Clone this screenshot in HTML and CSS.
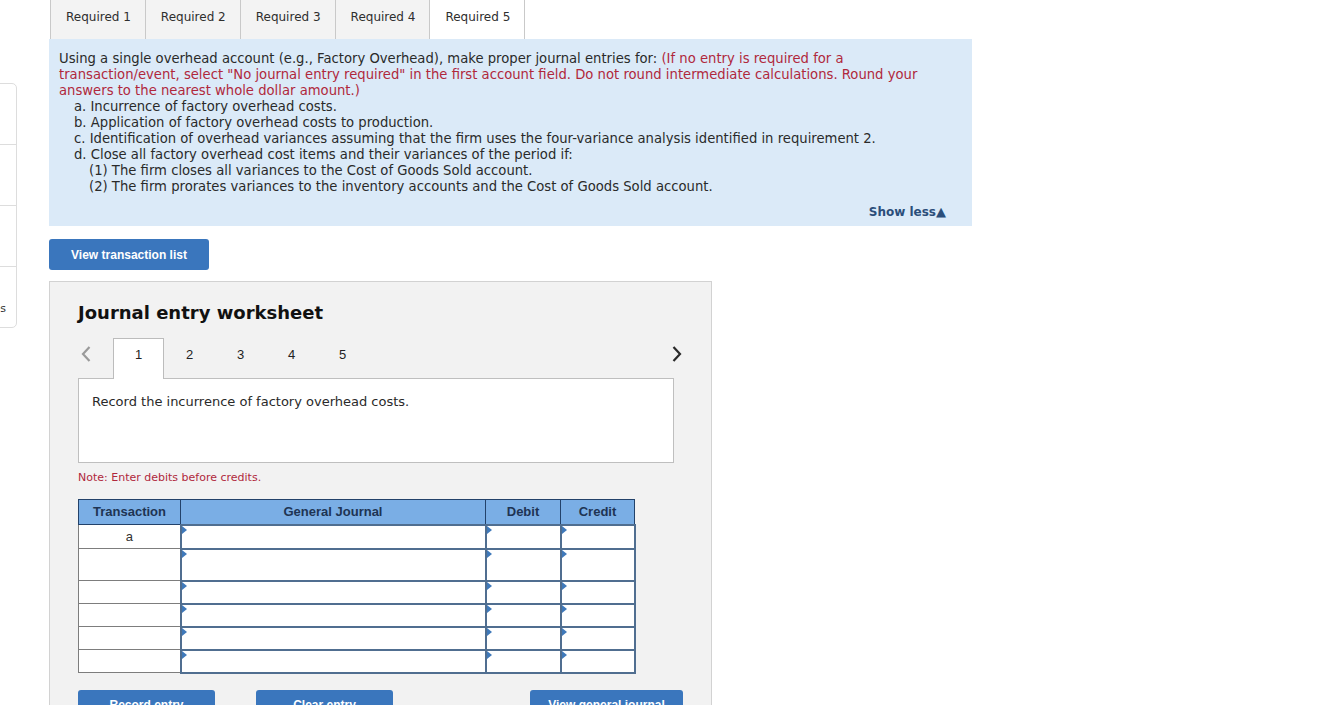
FILE: index.html
```html
<!DOCTYPE html>
<html lang="en">
<head>
<meta charset="utf-8">
<title>Journal entry worksheet</title>
<link rel="stylesheet" href="styles.css">
</head>
<body>
<div class="page">
  <aside class="sidebar">
    <div class="side-item"></div>
    <div class="side-item"></div>
    <div class="side-item"></div>
    <div class="side-item side-label"><span>Resources</span></div>
  </aside>
  <main class="main">
    <nav class="req-tabs">
      <a class="req-tab">Required 1</a>
      <a class="req-tab">Required 2</a>
      <a class="req-tab">Required 3</a>
      <a class="req-tab">Required 4</a>
      <a class="req-tab active">Required 5</a>
    </nav>
    <section class="prompt">
      <p class="prompt-text">Using a single overhead account (e.g., Factory Overhead), make proper journal entries for: <span class="hint">(If no entry is required for a transaction/event, select "No journal entry required" in the first account field. Do not round intermediate calculations. Round your answers to the nearest whole dollar amount.)</span></p>
      <ul class="parts">
        <li>a. Incurrence of factory overhead costs.</li>
        <li>b. Application of factory overhead costs to production.</li>
        <li>c. Identification of overhead variances assuming that the firm uses the four-variance analysis identified in requirement 2.</li>
        <li>d. Close all factory overhead cost items and their variances of the period if:
          <ul class="subparts">
            <li>(1) The firm closes all variances to the Cost of Goods Sold account.</li>
            <li>(2) The firm prorates variances to the inventory accounts and the Cost of Goods Sold account.</li>
          </ul>
        </li>
      </ul>
      <div class="show-less">Show less<span class="tri">▲</span></div>
    </section>
    <div class="list-bar"><button class="btn btn-list">View transaction list</button></div>
    <section class="worksheet">
      <h2 class="ws-title">Journal entry worksheet</h2>
      <div class="entry-nav">
        <span class="chev chev-left"><svg width="12" height="18" viewBox="0 0 12 18"><path d="M9.5 2 L3 9 L9.5 16" fill="none" stroke="#9a9a9a" stroke-width="2.2"/></svg></span>
        <div class="entry-tabs">
          <span class="entry-tab active">1</span>
          <span class="entry-tab">2</span>
          <span class="entry-tab">3</span>
          <span class="entry-tab">4</span>
          <span class="entry-tab">5</span>
        </div>
        <span class="chev chev-right"><svg width="12" height="18" viewBox="0 0 12 18"><path d="M2.5 2 L9 9 L2.5 16" fill="none" stroke="#2a2a2a" stroke-width="2.2"/></svg></span>
      </div>
      <div class="entry-desc">Record the incurrence of factory overhead costs.</div>
      <p class="note">Note: Enter debits before credits.</p>
      <table class="journal">
        <colgroup><col class="c-tx"><col class="c-gj"><col class="c-dr"><col class="c-cr"></colgroup>
        <thead>
          <tr><th>Transaction</th><th>General Journal</th><th>Debit</th><th>Credit</th></tr>
        </thead>
        <tbody>
          <tr class="r-first"><td class="tx">a</td><td class="in"></td><td class="in"></td><td class="in"></td></tr>
          <tr class="r-tall"><td class="tx"></td><td class="in"></td><td class="in"></td><td class="in"></td></tr>
          <tr class="r"><td class="tx"></td><td class="in"></td><td class="in"></td><td class="in"></td></tr>
          <tr class="r"><td class="tx"></td><td class="in"></td><td class="in"></td><td class="in"></td></tr>
          <tr class="r"><td class="tx"></td><td class="in"></td><td class="in"></td><td class="in"></td></tr>
          <tr class="r"><td class="tx"></td><td class="in"></td><td class="in"></td><td class="in"></td></tr>
        </tbody>
      </table>
      <div class="actions">
        <button class="btn btn-act">Record entry</button>
        <button class="btn btn-act">Clear entry</button>
        <button class="btn btn-act btn-view">View general journal</button>
      </div>
    </section>
  </main>
</div>
</body>
</html>
```
FILE: styles.css
```css
* { box-sizing: border-box; }
html, body { margin: 0; padding: 0; background: #fff; }
body {
  font-family: "DejaVu Sans", Verdana, sans-serif;
  font-size: 13px;
  color: #2a2a2a;
  overflow: hidden;
}
.page {
  display: flex;
  align-items: flex-start;
  width: 1342px;
  height: 705px;
  overflow: hidden;
}

/* left rail */
.sidebar {
  flex: none;
  margin-left: -6px;
  margin-top: 83px;
  width: 23px;
  border: 1px solid #dddddd;
  border-radius: 5px;
  background: #fff;
}
.side-item { height: 61px; border-top: 1px solid #dddddd; }
.side-item:first-child { border-top: 0; height: 60px; }
.side-label {
  display: flex;
  justify-content: flex-end;
  white-space: nowrap;
  padding: 35px 10px 0 0;
  font-size: 11px;
  line-height: 14px;
  color: #333;
}

/* main column */
.main {
  flex: none;
  margin-left: 32px;
  width: 923px;
}

.req-tabs { display: flex; padding-left: 1px; }
.req-tab {
  padding: 9px 14px 14px 15px;
  line-height: 16px;
  font-size: 12px;
  color: #2e2e2e;
  background: #f3f3f3;
  border-right: 1px solid #c9c9c9;
  cursor: pointer;
}
.req-tab:first-child { border-left: 1px solid #c9c9c9; }
.req-tab.active { background: #fff; }

.prompt {
  background: #dbeaf8;
  padding: 12px 12px 6px 10px;
  line-height: 16px;
  font-size: 13.2px;
}
.prompt-text { margin: 0; }
.hint { color: #b0283c; }
.parts, .subparts { list-style: none; margin: 0; padding: 0 0 0 15px; }
.show-less {
  margin-top: 9px;
  height: 16px;
  line-height: 16px;
  text-align: right;
  padding-right: 14px;
  font-size: 12px;
  font-weight: bold;
  color: #2b4e7a;
}
.tri { font-size: 13px; line-height: 16px; }

.btn {
  border: 0;
  border-radius: 3px;
  background: #3a76bd;
  color: #fff;
  font-family: "Liberation Sans", Arial, sans-serif;
  font-weight: bold;
  font-size: 12px;
  height: 31px;
  padding: 0;
  cursor: pointer;
}
.list-bar { margin-top: 13px; height: 31px; }
.btn-list { width: 160px; display: block; }

.worksheet {
  margin-top: 11px;
  width: 663px;
  background: #f2f2f2;
  border: 1px solid #d2d2d2;
  padding: 20px 0 30px 28px;
}
.ws-title {
  margin: 0;
  font-size: 18px;
  line-height: 22px;
  font-weight: bold;
  color: #111;
}
.entry-nav {
  margin-top: 14px;
  width: 605px;
  height: 40px;
  display: flex;
  align-items: flex-start;
}
.chev { display: flex; align-items: center; height: 31px; }
.chev-left { width: 35px; padding-left: 2px; }
.chev-right { margin-left: auto; }
.entry-tabs { display: flex; }
.entry-tab {
  width: 51px;
  height: 40px;
  text-align: center;
  line-height: 33px;
  font-family: "Liberation Sans", Arial, sans-serif;
  font-size: 13px;
  color: #222;
}
.entry-tab.active {
  position: relative;
  z-index: 1;
  height: 41px;
  margin-bottom: -1px;
  background: #fff;
  border: 1px solid #bcbcbc;
  border-bottom: 0;
  line-height: 32px;
}
.entry-desc {
  width: 596px;
  height: 85px;
  background: #fff;
  border: 1px solid #bfbfbf;
  padding: 15px 13px;
  line-height: 16px;
}
.note {
  margin: 8px 0 14px;
  font-size: 11px;
  line-height: 14px;
  color: #b0283c;
}

.journal {
  border-collapse: collapse;
  table-layout: fixed;
  width: 556px;
  font-family: "Liberation Sans", Arial, sans-serif;
  font-size: 13px;
}
.c-tx { width: 102px; }
.c-gj { width: 305px; }
.c-dr { width: 75px; }
.c-cr { width: 74px; }
.journal th {
  height: 25px;
  padding: 0 0 1px;
  background: #7aaee5;
  border: 1px solid #23426a;
  color: #1e3453;
  font-weight: bold;
  text-align: center;
}
.journal td { padding: 0; background: #fff; }
.journal .tx {
  border: 1px solid #7d7d7d;
  text-align: center;
  color: #333;
  vertical-align: middle;
}
.journal .in {
  position: relative;
  border: 2px solid #506e90;
}
.journal .in::before {
  content: "";
  position: absolute;
  top: 0;
  left: 0;
  border-left: 5px solid #3f79ba;
  border-top: 4px solid transparent;
  border-bottom: 4px solid transparent;
}
.r-first td { height: 24px; }
.r-tall td { height: 32px; }
.r td { height: 23px; }

.actions {
  margin-top: 16px;
  width: 605px;
  display: flex;
  gap: 41px;
}
.btn-act { width: 137px; }
.btn-view { width: 153px; margin-left: auto; }
```
